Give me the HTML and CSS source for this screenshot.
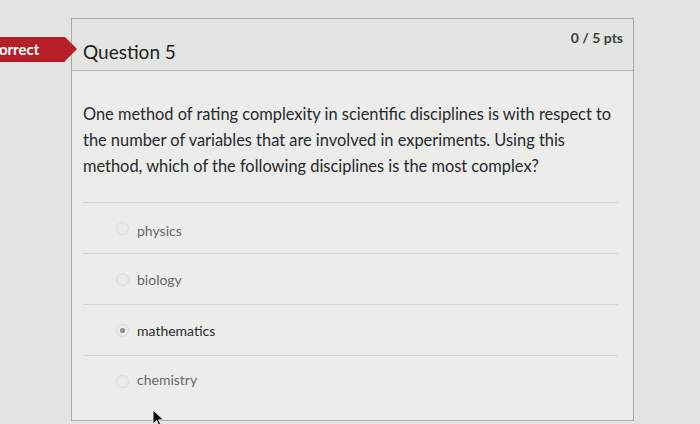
FILE: index.html
```html
<!DOCTYPE html>
<html>
<head>
<meta charset="utf-8">
<link rel="stylesheet" href="styles.css">
</head>
<body>
<div class="page">
  <div class="card">
    <div class="banner">Incorrect</div>
    <div class="header">
      <h2 class="title">Question 5</h2>
      <div class="pts">0 / 5 pts</div>
    </div>
    <div class="content">
      <p class="question">One method of rating complexity in scientific disciplines is with respect to the number of variables that are involved in experiments. Using this method, which of the following disciplines is the most complex?</p>
      <div class="answers">
        <div class="answer"><span class="radio"></span><span class="label">physics</span></div>
        <div class="answer"><span class="radio"></span><span class="label">biology</span></div>
        <div class="answer"><span class="radio checked"></span><span class="label dark">mathematics</span></div>
        <div class="answer"><span class="radio"></span><span class="label">chemistry</span></div>
      </div>
    </div>
    <svg class="cursor" width="14" height="20" viewBox="0 0 14 20"><path d="M1 1 L1 15 L4.5 11.5 L7 17 L9 16 L6.7 10.8 L11.5 10.8 Z" fill="#111" stroke="#fff" stroke-width="0.8"/></svg>
  </div>
</div>
</body>
</html>
```
FILE: styles.css
```css
html, body {
  margin: 0;
  padding: 0;
}
body {
  background: #e3e3e1;
  font-family: Lato, "Open Sans", sans-serif;
  color: #2f3337;
  width: 700px;
  height: 424px;
  overflow: hidden;
}
.page {
  padding: 18px 0 0 71px;
}
.card {
  position: relative;
  width: 561px;
  height: 401px;
  border: 1px solid #a9a9a7;
  background: #ececea;
}
.banner {
  position: absolute;
  left: -101px;
  top: 18px;
  height: 25px;
  padding: 0 26px 0 8px;
  background: #b71f28;
  color: #fff;
  font-size: 15px;
  font-weight: 700;
  line-height: 25px;
  white-space: nowrap;
}
.banner::after {
  content: "";
  position: absolute;
  right: -12px;
  top: 0;
  border-top: 12.5px solid transparent;
  border-bottom: 12.5px solid transparent;
  border-left: 12px solid #b71f28;
}
.header {
  display: flex;
  justify-content: space-between;
  align-items: flex-start;
  padding: 9px 10px 0 11px;
  box-sizing: border-box;
  background: #e4e4e2;
  border-bottom: 1px solid #b4b4b2;
  height: 52px;
}
.title {
  margin: 12px 0 0;
  font-size: 19px;
  font-weight: 400;
  line-height: 24px;
  color: #1a1d20;
}
.pts {
  font-size: 14px;
  font-weight: 700;
  line-height: 20px;
  color: #3a3e42;
}
.content {
  padding: 30px 15px 0 11px;
}
.question {
  margin: 0;
  font-size: 16.4px;
  line-height: 26px;
  color: #25292d;
}
.answers {
  margin-top: 23px;
}
.answer {
  display: flex;
  align-items: center;
  height: 50px;
  border-top: 1px solid #d7d7d5;
  padding-left: 33px;
  gap: 8px;
}
.answer:first-child .label {
  margin-top: 4px;
}
.answer:last-child .label {
  margin-top: -3px;
}
.radio {
  width: 11px;
  height: 11px;
  border-radius: 50%;
  border: 1px solid #dcdcda;
  background: #ebebe9;
  position: relative;
}
.radio.checked::after {
  content: "";
  position: absolute;
  left: 3px;
  top: 3px;
  width: 5px;
  height: 5px;
  border-radius: 50%;
  background: #8a8a88;
}
.label {
  font-size: 14px;
  color: #66696c;
}
.label.dark {
  color: #2a2e32;
}
.cursor {
  position: absolute;
  left: 80px;
  top: 390px;
}
```
